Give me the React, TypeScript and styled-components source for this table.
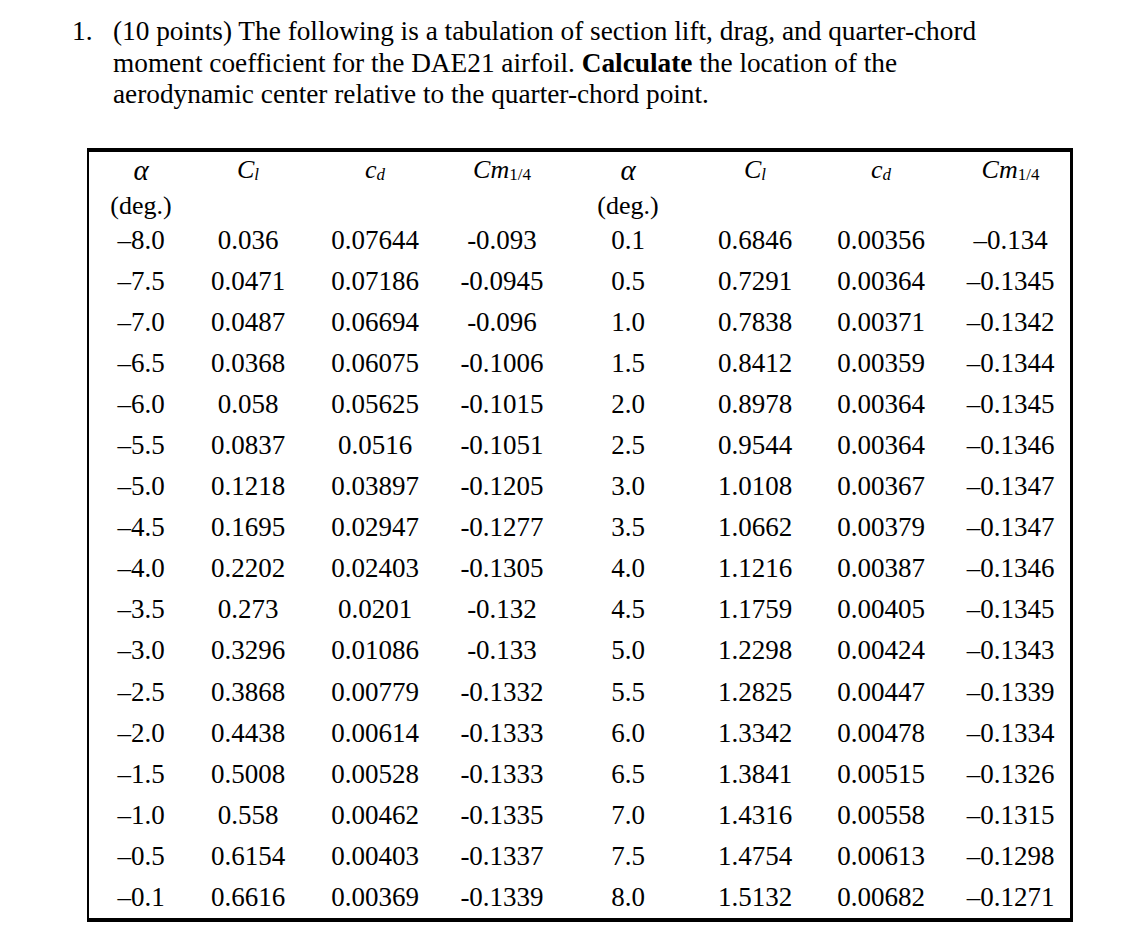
import styled, { createGlobalStyle } from "styled-components";

const LEFT = [
  ["–8.0", "0.036", "0.07644", "-0.093"],
  ["–7.5", "0.0471", "0.07186", "-0.0945"],
  ["–7.0", "0.0487", "0.06694", "-0.096"],
  ["–6.5", "0.0368", "0.06075", "-0.1006"],
  ["–6.0", "0.058", "0.05625", "-0.1015"],
  ["–5.5", "0.0837", "0.0516", "-0.1051"],
  ["–5.0", "0.1218", "0.03897", "-0.1205"],
  ["–4.5", "0.1695", "0.02947", "-0.1277"],
  ["–4.0", "0.2202", "0.02403", "-0.1305"],
  ["–3.5", "0.273", "0.0201", "-0.132"],
  ["–3.0", "0.3296", "0.01086", "-0.133"],
  ["–2.5", "0.3868", "0.00779", "-0.1332"],
  ["–2.0", "0.4438", "0.00614", "-0.1333"],
  ["–1.5", "0.5008", "0.00528", "-0.1333"],
  ["–1.0", "0.558", "0.00462", "-0.1335"],
  ["–0.5", "0.6154", "0.00403", "-0.1337"],
  ["–0.1", "0.6616", "0.00369", "-0.1339"],
];

const RIGHT = [
  ["0.1", "0.6846", "0.00356", "–0.134"],
  ["0.5", "0.7291", "0.00364", "–0.1345"],
  ["1.0", "0.7838", "0.00371", "–0.1342"],
  ["1.5", "0.8412", "0.00359", "–0.1344"],
  ["2.0", "0.8978", "0.00364", "–0.1345"],
  ["2.5", "0.9544", "0.00364", "–0.1346"],
  ["3.0", "1.0108", "0.00367", "–0.1347"],
  ["3.5", "1.0662", "0.00379", "–0.1347"],
  ["4.0", "1.1216", "0.00387", "–0.1346"],
  ["4.5", "1.1759", "0.00405", "–0.1345"],
  ["5.0", "1.2298", "0.00424", "–0.1343"],
  ["5.5", "1.2825", "0.00447", "–0.1339"],
  ["6.0", "1.3342", "0.00478", "–0.1334"],
  ["6.5", "1.3841", "0.00515", "–0.1326"],
  ["7.0", "1.4316", "0.00558", "–0.1315"],
  ["7.5", "1.4754", "0.00613", "–0.1298"],
  ["8.0", "1.5132", "0.00682", "–0.1271"],
];

const COLS = "104px 110px 144px 110px 142px 112px 140px 119px";

function HeaderGroup() {
  return (
    <>
      <HeadCell>
        <Alpha>α</Alpha>
        <br />
        (deg.)
      </HeadCell>
      <HeadCell>
        <i>C</i>
        <Sub $italic>l</Sub>
      </HeadCell>
      <HeadCell>
        <i>c</i>
        <Sub $italic>d</Sub>
      </HeadCell>
      <HeadCell>
        <i>Cm</i>
        <Sub>1/4</Sub>
      </HeadCell>
    </>
  );
}

export default function App() {
  return (
    <>
      <GlobalStyle />
      <Page>
        <Question>
          <Num>1.</Num>
          <p>
            (10 points) The following is a tabulation of section lift, drag, and quarter-chord
            <br />
            moment coefficient for the DAE21 airfoil. <b>Calculate</b> the location of the
            <br />
            aerodynamic center relative to the quarter-chord point.
          </p>
        </Question>
        <Table>
          <HeaderGroup />
          <HeaderGroup />
          {LEFT.map((row, i) => (
            <Row key={i}>
              {row.map((v, j) => (
                <Cell key={"l" + j}>{v}</Cell>
              ))}
              {RIGHT[i].map((v, j) => (
                <Cell key={"r" + j}>{v}</Cell>
              ))}
            </Row>
          ))}
        </Table>
      </Page>
    </>
  );
}

const GlobalStyle = createGlobalStyle`
  body {
    margin: 0;
    background: #ffffff;
    color: #000000;
    font-family: "Liberation Serif", "Times New Roman", serif;
  }
`;

const Page = styled.div`
  padding: 16px 0 0 72px;
  width: 1001px;
`;

const Question = styled.div`
  display: flex;
  font-size: 27.3px;
  line-height: 31.5px;

  p {
    margin: 0;
    white-space: nowrap;
  }
`;

const Num = styled.span`
  width: 41px;
  flex-shrink: 0;
`;

const Table = styled.div`
  margin: 37px 0 0 15px;
  width: 981px;
  display: grid;
  grid-template-columns: ${COLS};
  border-top: 4px solid #000;
  border-bottom: 4px solid #000;
  border-left: 2px solid #000;
  border-right: 3px solid #000;
  font-size: 27px;
  padding-top: 1px;
`;

const HeadCell = styled.div`
  text-align: center;
  line-height: 34px;
  height: 67px;
  font-size: 26px;
`;

const Alpha = styled.i`
  font-size: 29px;
`;

const Sub = styled.span<{ $italic?: boolean }>`
  font-size: 17px;
  font-style: ${(p) => (p.$italic ? "italic" : "normal")};
  vertical-align: -2px;
`;

const Row = styled.div`
  display: contents;
`;

const Cell = styled.div`
  text-align: center;
  height: 41.1px;
  line-height: 41.1px;
`;
